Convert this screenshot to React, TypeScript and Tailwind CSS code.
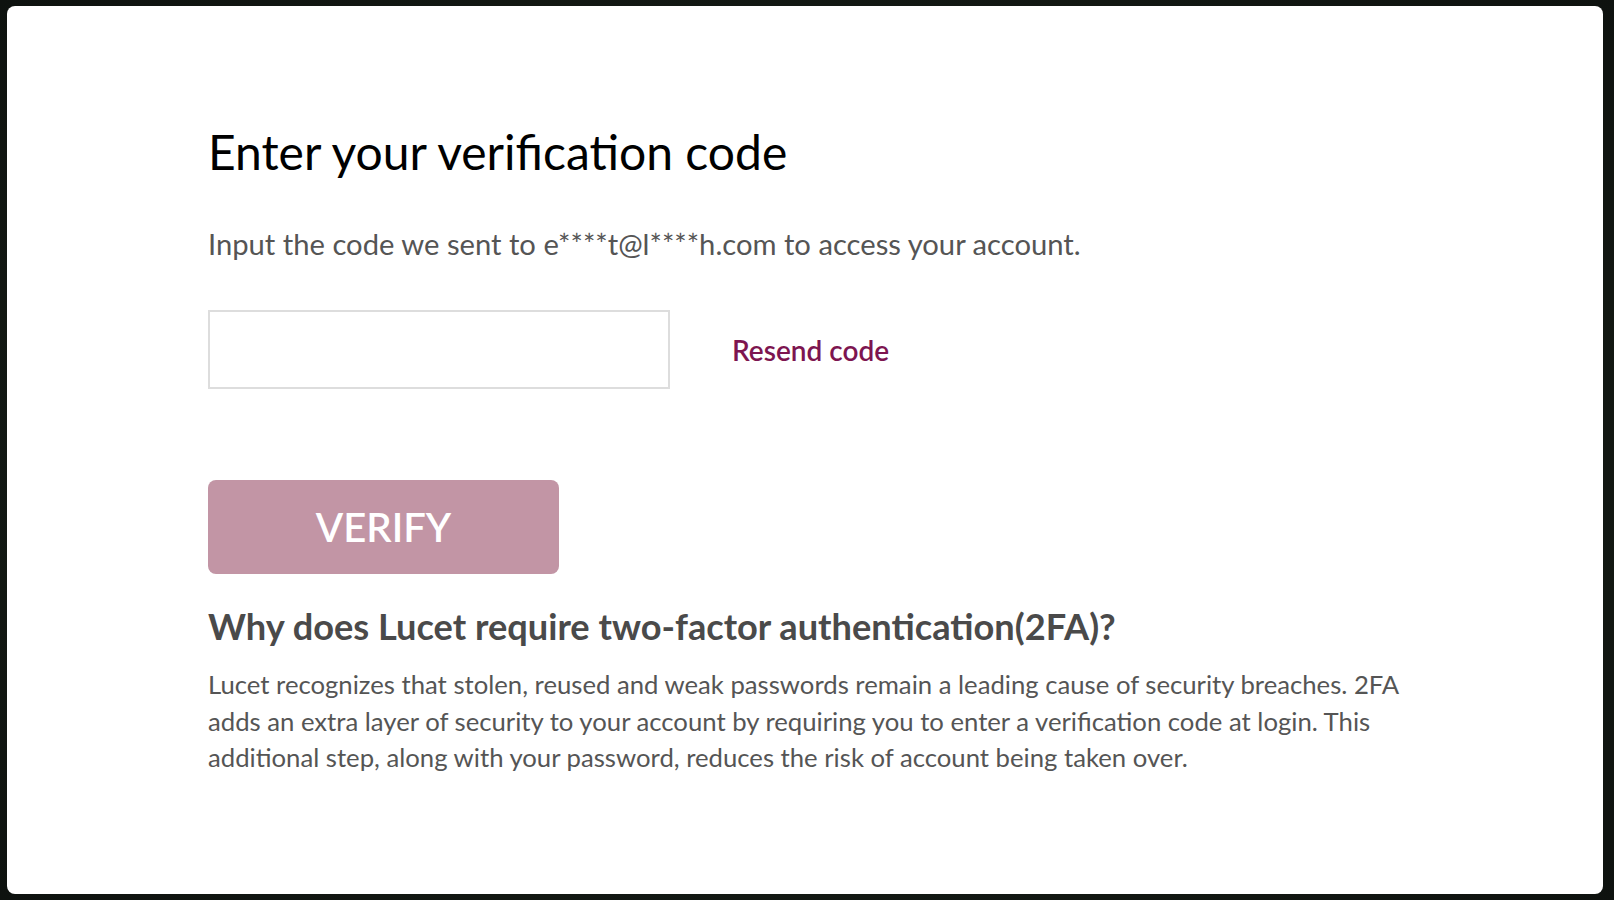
export default function App() {
  return (
    <div className="min-h-[900px] w-full bg-[radial-gradient(ellipse_at_center,#2a3526_0%,#141a14_60%,#0e120f_100%)] pt-[6px] pb-[6px] pl-[7px] pr-[11px] font-['Lato',sans-serif]">
      <div className="h-[888px] rounded-[8px] bg-white pl-[201px] pt-[117px]">
        <h1 className="text-[48px] leading-[58px] text-black">Enter your verification code</h1>

        <p className="mt-[46px] text-[29.2px] leading-[34px] text-[#555555]">
          Input the code we sent to e****t@l****h.com to access your account.
        </p>

        <div className="mt-[49px] flex items-center">
          <input
            type="text"
            className="h-[79px] w-[462px] border-2 border-[#dddddd] bg-white px-4 text-[26px] outline-none"
          />
          <a href="#" className="ml-[62px] text-[28px] font-semibold text-[#7d1550]">
            Resend code
          </a>
        </div>

        <button className="mt-[91px] flex h-[94px] w-[351px] items-center justify-center rounded-[8px] bg-[#c295a5] text-[40px] font-semibold text-white">
          VERIFY
        </button>

        <h2 className="mt-[31px] text-[36.2px] font-bold leading-[42px] text-[#4a4a4a]">
          Why does Lucet require two-factor authentication(2FA)?
        </h2>

        <p className="mt-[19px] max-w-[1210px] text-[25.7px] leading-[36.5px] text-[#555555]">
          Lucet recognizes that stolen, reused and weak passwords remain a leading cause of security breaches. 2FA adds an
          extra layer of security to your account by requiring you to enter a verification code at login. This additional
          step, along with your password, reduces the risk of account being taken over.
        </p>
      </div>
    </div>
  )
}
